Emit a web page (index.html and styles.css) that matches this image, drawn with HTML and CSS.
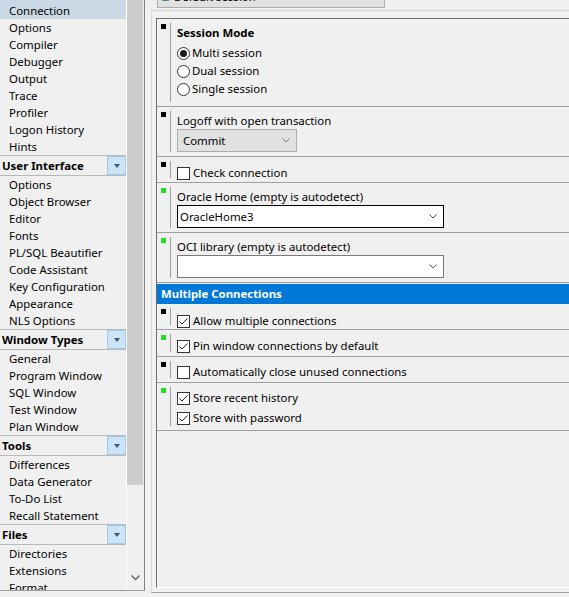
FILE: index.html
```html
<!DOCTYPE html>
<html>
<head>
<meta charset="utf-8">
<link rel="stylesheet" href="styles.css">
</head>
<body>
<div class="app">
  <div class="nav">
    <div class="list">
      <div class="item sel">Connection</div>
      <div class="item">Options</div>
      <div class="item">Compiler</div>
      <div class="item">Debugger</div>
      <div class="item">Output</div>
      <div class="item">Trace</div>
      <div class="item">Profiler</div>
      <div class="item">Logon History</div>
      <div class="item">Hints</div>
      <div class="hdr"><span>User Interface</span><span class="dd"><i class="tri"></i></span></div>
      <div class="item">Options</div>
      <div class="item">Object Browser</div>
      <div class="item">Editor</div>
      <div class="item">Fonts</div>
      <div class="item">PL/SQL Beautifier</div>
      <div class="item">Code Assistant</div>
      <div class="item">Key Configuration</div>
      <div class="item">Appearance</div>
      <div class="item">NLS Options</div>
      <div class="hdr"><span>Window Types</span><span class="dd"><i class="tri"></i></span></div>
      <div class="item">General</div>
      <div class="item">Program Window</div>
      <div class="item">SQL Window</div>
      <div class="item">Test Window</div>
      <div class="item">Plan Window</div>
      <div class="hdr"><span>Tools</span><span class="dd"><i class="tri"></i></span></div>
      <div class="item">Differences</div>
      <div class="item">Data Generator</div>
      <div class="item">To-Do List</div>
      <div class="item">Recall Statement</div>
      <div class="hdr"><span>Files</span><span class="dd"><i class="tri"></i></span></div>
      <div class="item">Directories</div>
      <div class="item">Extensions</div>
      <div class="item">Format</div>
    </div>
    <div class="scroll">
      <div class="thumb"></div>
      <div class="track"></div>
      <div class="arrow"><svg width="9" height="6" viewBox="0 0 9 6"><polyline points="0.5,0.5 4.5,4.5 8.5,0.5" fill="none" stroke="#606060" stroke-width="1.4"/></svg></div>
    </div>
  </div>

  <div class="main">
    <div class="tabbar">
      <div class="tabbtn"><i class="hex"></i><span>Default session</span></div>
    </div>
    <div class="frame">
      <div class="panel">
        <div class="sec h88">
          <div class="ind"><b class="sq blk"></b></div>
          <div class="body p5">
            <div class="title">Session Mode</div>
            <div class="opt mt1"><span class="radio on"></span>Multi session</div>
            <div class="opt"><span class="radio"></span>Dual session</div>
            <div class="opt"><span class="radio"></span>Single session</div>
          </div>
        </div>
        <div class="sec h50">
          <div class="ind"><b class="sq blk"></b></div>
          <div class="body p5">
            <div class="lbl">Logoff with open transaction</div>
            <div class="combo gray w120"><span>Commit</span><svg class="chev" width="8" height="5" viewBox="0 0 8 5"><polyline points="0.5,0.5 4,4 7.5,0.5" fill="none" stroke="#7a7a7a" stroke-width="1"/></svg></div>
          </div>
        </div>
        <div class="sec h26">
          <div class="ind"><b class="sq blk"></b></div>
          <div class="body p6">
            <div class="opt"><span class="cb"></span>Check connection</div>
          </div>
        </div>
        <div class="sec h50">
          <div class="ind"><b class="sq grn"></b></div>
          <div class="body p5">
            <div class="lbl">Oracle Home (empty is autodetect)</div>
            <div class="combo white dark w267"><span>OracleHome3</span><svg class="chev" width="8" height="5" viewBox="0 0 8 5"><polyline points="0.5,0.5 4,4 7.5,0.5" fill="none" stroke="#505050" stroke-width="1"/></svg></div>
          </div>
        </div>
        <div class="sec h50">
          <div class="ind"><b class="sq grn"></b></div>
          <div class="body p5">
            <div class="lbl">OCI library (empty is autodetect)</div>
            <div class="combo white w267"><span></span><svg class="chev" width="8" height="5" viewBox="0 0 8 5"><polyline points="0.5,0.5 4,4 7.5,0.5" fill="none" stroke="#505050" stroke-width="1"/></svg></div>
          </div>
        </div>
        <div class="band">Multiple Connections</div>
        <div class="sec h26">
          <div class="ind"><b class="sq blk"></b></div>
          <div class="body p7">
            <div class="opt"><span class="cb on"><svg width="11" height="11" viewBox="0 0 11 11"><polyline points="1.5,5.5 4,8 9.5,2.5" fill="none" stroke="#222" stroke-width="1"/></svg></span>Allow multiple connections</div>
          </div>
        </div>
        <div class="sec h27">
          <div class="ind"><b class="sq grn"></b></div>
          <div class="body p6">
            <div class="opt"><span class="cb on"><svg width="11" height="11" viewBox="0 0 11 11"><polyline points="1.5,5.5 4,8 9.5,2.5" fill="none" stroke="#222" stroke-width="1"/></svg></span>Pin window connections by default</div>
          </div>
        </div>
        <div class="sec h26">
          <div class="ind"><b class="sq blk"></b></div>
          <div class="body p5">
            <div class="opt"><span class="cb"></span>Automatically close unused connections</div>
          </div>
        </div>
        <div class="sec h48">
          <div class="ind"><b class="sq grn"></b></div>
          <div class="body p5">
            <div class="opt"><span class="cb on"><svg width="11" height="11" viewBox="0 0 11 11"><polyline points="1.5,5.5 4,8 9.5,2.5" fill="none" stroke="#222" stroke-width="1"/></svg></span>Store recent history</div>
            <div class="opt mt2"><span class="cb on"><svg width="11" height="11" viewBox="0 0 11 11"><polyline points="1.5,5.5 4,8 9.5,2.5" fill="none" stroke="#222" stroke-width="1"/></svg></span>Store with password</div>
          </div>
        </div>
      </div>
    </div>
  </div>
</div>
</body>
</html>
```

FILE: styles.css
```css
html, body {
  margin: 0;
  padding: 0;
  background: #f0f0f0;
  overflow: hidden;
}
body {
  font-family: "Noto Sans", "Open Sans", sans-serif;
  font-size: 11.4px;
  color: #000;
}
.app {
  display: flex;
  height: 597px;
  width: 569px;
  overflow: hidden;
}

/* ---------- left navigation ---------- */
.nav {
  width: 145px;
  height: 591px;
  flex: none;
  display: flex;
  box-sizing: border-box;
  border-right: 1px solid #828282;
  border-bottom: 1px solid #a0a0a0;
}
.list {
  width: 127px;
  flex: none;
  box-sizing: border-box;
  border-right: 1px solid #ffffff;
  overflow: hidden;
}
.item {
  height: 17px;
  line-height: 17px;
  padding-left: 9px;
  white-space: nowrap;
}
.item.sel {
  padding-top: 2px;
  background: #cbd9e7;
}
.hdr {
  height: 21px;
  box-sizing: border-box;
  border-top: 1px solid #b9b9b9;
  border-bottom: 1px solid #b9b9b9;
  display: flex;
  justify-content: space-between;
  font-weight: bold;
  line-height: 19px;
  padding-left: 2px;
  white-space: nowrap;
}
.dd {
  width: 19px;
  box-sizing: border-box;
  background: #cce4f7;
  border: 1px solid #a2c9ea;
  display: flex;
  align-items: center;
  justify-content: center;
}
.tri {
  width: 0;
  height: 0;
  border-left: 3.5px solid transparent;
  border-right: 3.5px solid transparent;
  border-top: 4px solid #3e5872;
}
.scroll {
  width: 17px;
  flex: none;
  display: flex;
  flex-direction: column;
}
.thumb {
  width: 16px;
  height: 485px;
  background: #cdcdcd;
}
.track {
  flex: 1;
}
.arrow {
  height: 17px;
  display: flex;
  align-items: center;
  justify-content: center;
  padding-bottom: 4px;
}

/* ---------- main area ---------- */
.main {
  flex: 1;
  height: 593px;
  padding-left: 6px;
  display: flex;
  flex-direction: column;
  min-width: 0;
}
.tabbar {
  height: 10px;
  flex: none;
}
.tabbtn {
  margin-left: 6px;
  margin-top: -15px;
  width: 228px;
  height: 23px;
  box-sizing: border-box;
  background: #e1e1e1;
  border: 1px solid #adadad;
  display: flex;
  align-items: center;
  gap: 4px;
  padding-left: 3px;
  white-space: nowrap;
  overflow: hidden;
}
.hex {
  width: 9px;
  height: 9px;
  border-radius: 3px;
  background: #3a8f8a;
  flex: none;
}
.frame {
  flex: 1;
  box-sizing: border-box;
  border-top: 1px solid #d4d4d4;
  border-left: 1px solid #dadada;
  border-bottom: 1px solid #a0a0a0;
  padding: 7px 0 4px 4px;
  display: flex;
  flex-direction: column;
}
.panel {
  flex: 1;
  border-top: 1px solid #6d6d6d;
  border-left: 1px solid #6d6d6d;
  border-bottom: 1px solid #ffffff;
}
.sec {
  display: flex;
  box-sizing: border-box;
  border-bottom: 1px solid #a0a0a0;
}
.h88 { height: 88px; }
.h50 { height: 50px; }
.h48 { height: 48px; }
.h27 { height: 27px; }
.h26 { height: 26px; }
.ind {
  width: 14px;
  flex: none;
  box-sizing: border-box;
  margin: 4px 0;
  border-right: 1px solid #a0a0a0;
}
.sq {
  display: block;
  width: 5px;
  height: 5px;
  margin: 1px 0 0 4px;
}
.sq.blk { background: #000; }
.sq.grn { background: #22e022; }
.body {
  padding-left: 6px;
  flex: 1;
  min-width: 0;
}
.p5 { padding-top: 5px; }
.p6 { padding-top: 6px; }
.p7 { padding-top: 7px; }
.p8 { padding-top: 8px; }
.mt1 { margin-top: 1px; }
.mt2 { margin-top: 2px; }
.title {
  font-weight: bold;
  line-height: 18px;
  height: 18px;
}
.lbl {
  line-height: 17px;
  height: 17px;
  white-space: nowrap;
}
.opt {
  height: 18px;
  display: flex;
  align-items: center;
  white-space: nowrap;
}
.radio {
  width: 13px;
  height: 13px;
  box-sizing: border-box;
  border: 1px solid #333;
  border-radius: 50%;
  background: #fff;
  margin: 2px 2px 0 0;
  display: flex;
  align-items: center;
  justify-content: center;
  flex: none;
}
.radio.on::after {
  content: "";
  width: 7px;
  height: 7px;
  border-radius: 50%;
  background: #1a1a1a;
}
.cb {
  width: 13px;
  height: 13px;
  box-sizing: border-box;
  border: 1px solid #333;
  background: #fff;
  margin: 2px 3px 0 0;
  flex: none;
  display: flex;
}
.combo {
  height: 23px;
  box-sizing: border-box;
  display: flex;
  align-items: center;
  justify-content: space-between;
  padding-right: 6px;
}
.combo.gray {
  background: #e1e1e1;
  border: 1px solid #adadad;
  padding-left: 5px;
}
.combo.white {
  background: #fff;
  border: 1px solid #7a7a7a;
  padding-left: 2px;
}
.combo.dark {
  border-color: #000;
}
.w120 { width: 120px; }
.w267 { width: 267px; }
.band {
  margin-top: 1px;
  height: 20px;
  line-height: 20px;
  background: #0078d7;
  color: #fff;
  font-weight: bold;
  padding-left: 4px;
  white-space: nowrap;
}
```
